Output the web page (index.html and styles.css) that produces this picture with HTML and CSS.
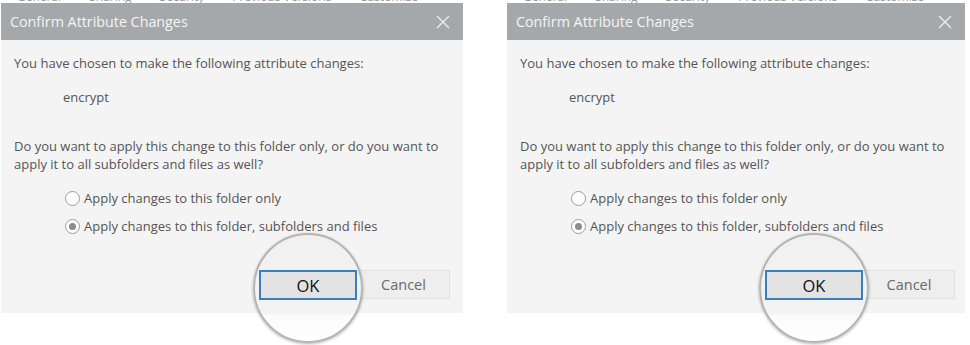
FILE: index.html
```html
<!DOCTYPE html>
<html lang="en">
<head>
  <meta charset="UTF-8">
  <title>Confirm Attribute Changes</title>
  <link rel="stylesheet" href="styles.css">
</head>
<body>
  <div class="screen">
    <div class="window window-left">
      <div class="tabs"><span>General</span><span>Sharing</span><span>Security</span><span>Previous Versions</span><span>Customize</span></div>
      <div class="titlebar">
        <span class="title">Confirm Attribute Changes</span>
        <svg class="close" width="14" height="14" viewBox="0 0 14 14"><path d="M1 1L13 13M13 1L1 13" /></svg>
      </div>
      <div class="dialog-body">
        <p class="line">You have chosen to make the following attribute changes:</p>
        <p class="attr">encrypt</p>
        <p class="question">Do you want to apply this change to this folder only, or do you want to apply it to all subfolders and files as well?</p>
        <div class="option"><span class="radio"></span>Apply changes to this folder only</div>
        <div class="option option-second"><span class="radio checked"></span>Apply changes to this folder, subfolders and files</div>
        <div class="buttons">
          <div class="lens"><button class="btn btn-ok">OK</button></div>
          <button class="btn btn-cancel">Cancel</button>
        </div>
      </div>
    </div>

    <div class="window window-right">
      <div class="tabs"><span>General</span><span>Sharing</span><span>Security</span><span>Previous Versions</span><span>Customize</span></div>
      <div class="titlebar">
        <span class="title">Confirm Attribute Changes</span>
        <svg class="close" width="14" height="14" viewBox="0 0 14 14"><path d="M1 1L13 13M13 1L1 13" /></svg>
      </div>
      <div class="dialog-body">
        <p class="line">You have chosen to make the following attribute changes:</p>
        <p class="attr">encrypt</p>
        <p class="question">Do you want to apply this change to this folder only, or do you want to apply it to all subfolders and files as well?</p>
        <div class="option"><span class="radio"></span>Apply changes to this folder only</div>
        <div class="option option-second"><span class="radio checked"></span>Apply changes to this folder, subfolders and files</div>
        <div class="buttons">
          <div class="lens"><button class="btn btn-ok">OK</button></div>
          <button class="btn btn-cancel">Cancel</button>
        </div>
      </div>
    </div>
  </div>
</body>
</html>
```

FILE: styles.css
```css
html, body {
  height: 345px;
}
body {
  margin: 0;
  background: #fff;
  font-family: "Open Sans", "Noto Sans", Arial, sans-serif;
  color: #555;
}
.screen {
  display: flex;
  gap: 44px;
  padding-left: 1px;
  height: 345px;
}
.window {
  width: 462px;
}
.window-right {
  width: 458px;
}
.tabs {
  height: 3px;
  overflow: hidden;
  display: flex;
  gap: 28px;
  padding-left: 16px;
  font-size: 12px;
  line-height: 12px;
  color: #999;
}
.tabs span {
  margin-top: -9px;
}
.titlebar {
  height: 37px;
  background: #a5a8ab;
  display: flex;
  align-items: center;
  justify-content: space-between;
  padding: 0 13px 0 9px;
}
.title {
  color: #f4f4f4;
  font-size: 14.3px;
  margin-top: -1px;
}
.close path {
  stroke: #eeeeee;
  stroke-width: 1.3;
  fill: none;
}
.dialog-body {
  height: 273px;
  box-sizing: border-box;
  background: #f4f4f4;
  padding: 13px 10px 0 13px;
  font-size: 13px;
}
.dialog-body p {
  margin: 0;
}
.line {
  line-height: 20px;
}
.attr {
  line-height: 20px;
  margin-top: 14px !important;
  padding-left: 49px;
}
.question {
  line-height: 18px;
  margin-top: 30px !important;
}
.option {
  display: flex;
  align-items: center;
  gap: 4px;
  height: 20px;
  margin-top: 15px;
  padding-left: 51px;
}
.option-second {
  margin-top: 8px;
}
.radio {
  width: 13px;
  height: 13px;
  border: 1px solid #9c9c9c;
  border-radius: 50%;
  background: #fff;
  display: flex;
  align-items: center;
  justify-content: center;
}
.radio.checked::after {
  content: "";
  width: 7px;
  height: 7px;
  border-radius: 50%;
  background: #8c8c8c;
}
.buttons {
  display: flex;
  margin-top: 34px;
  padding-left: 245px;
}
.lens {
  position: relative;
  z-index: 1;
}
.lens::before {
  content: "";
  position: absolute;
  left: 50%;
  top: 50%;
  width: 106px;
  height: 106px;
  margin: -52px 0 0 -55px;
  border: 2px solid #b4b4b4;
  border-radius: 50%;
  background: linear-gradient(#f0f0f0 0, #f3f3f3 74%, #fbfbfb 76%, #fff 100%);
  box-shadow: 0 1px 3px rgba(0, 0, 0, 0.3);
  z-index: -1;
}
.btn {
  font-family: inherit;
  cursor: pointer;
}
.btn-ok {
  width: 98px;
  height: 30px;
  background: #e3e3e3;
  border: 2px solid #3b7dc0;
  color: #111;
  font-size: 16.5px;
  padding: 0;
}
.btn-cancel {
  width: 93px;
  height: 29px;
  background: #eeeeee;
  border: 1px solid #e2e2e2;
  color: #6a6a6a;
  font-size: 14.5px;
  padding: 0;
}
```
